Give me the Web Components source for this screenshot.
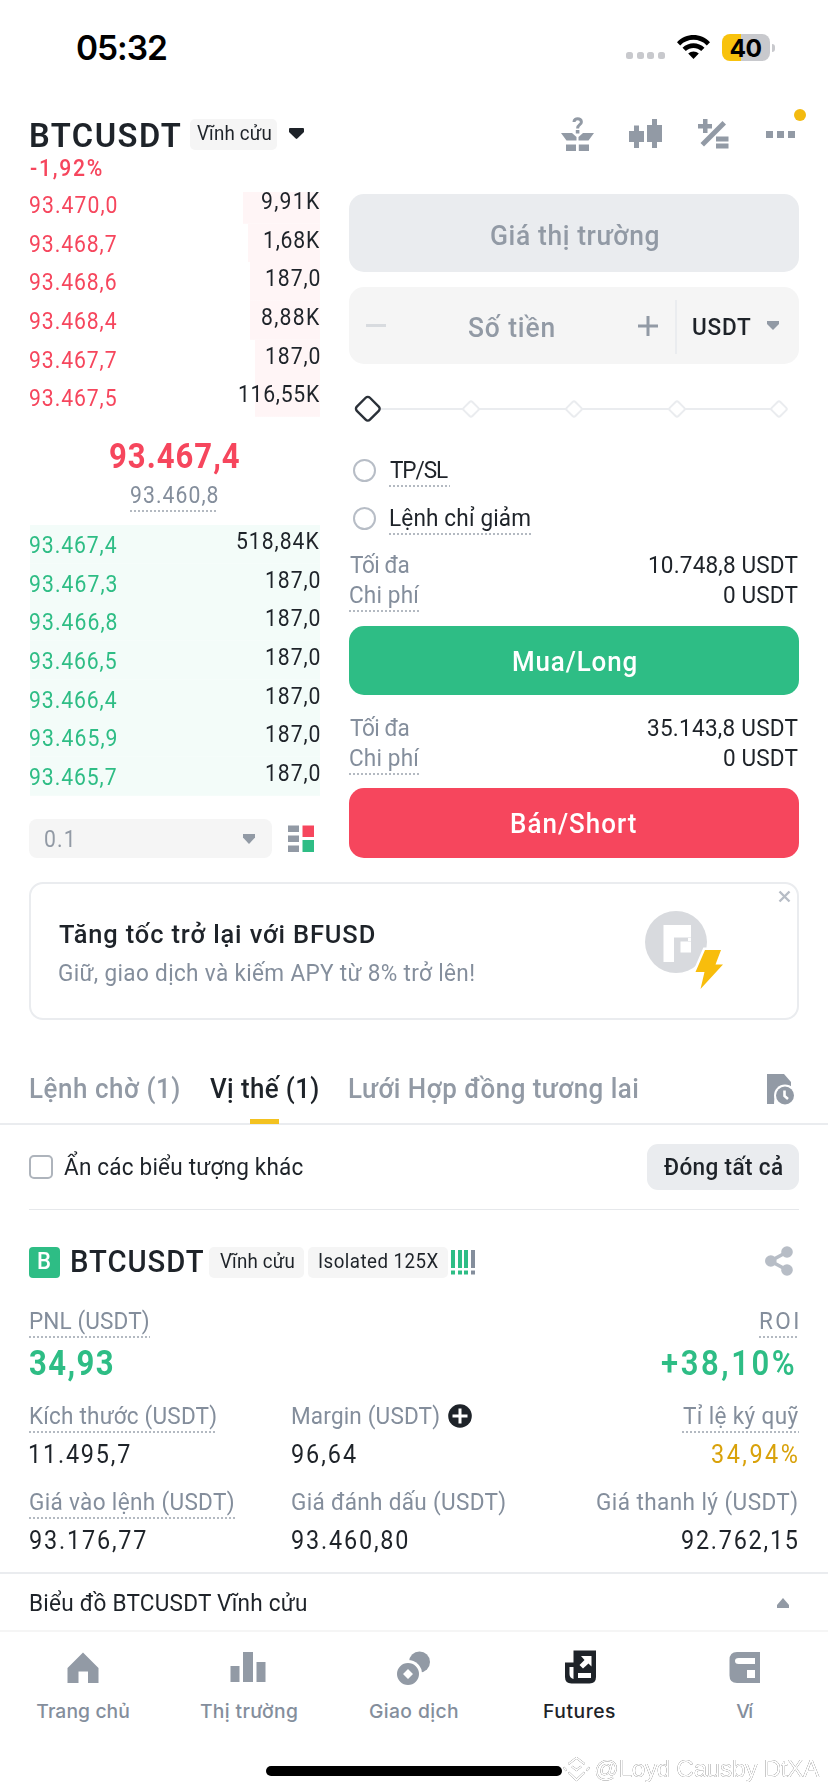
<!DOCTYPE html>
<html lang="vi">
<head>
<meta charset="utf-8">
<title>BTCUSDT Futures</title>
<style>
html,body{margin:0;padding:0;background:#fff}
body{width:828px;height:1792px;overflow:hidden;font-family:Roboto,"Noto Sans",sans-serif;color:#1e2329}
</style>
</head>
<body>
<futures-app></futures-app>
<script>
const component = (tag, css, html) => {
  const tpl = document.createElement('template');
  tpl.innerHTML = `<style>*{box-sizing:border-box}:host{display:block;box-sizing:border-box}svg{display:block;flex:none}${css}</style>${html}`;
  customElements.define(tag, class extends HTMLElement {
    connectedCallback() {
      if (this.shadowRoot) return;
      this.attachShadow({mode: 'open'}).append(tpl.content.cloneNode(true));
    }
  });
};

// A single line of text whose tracking is tuned so that its ink fills a given width.
// Figures are drawn a little condensed, words slightly so.
const pen = document.createElement('canvas').getContext('2d');
customElements.define('fit-text', class extends HTMLElement {
  connectedCallback() {
    if (this.shadowRoot) return;
    const get = (n, d) => this.getAttribute(n) ?? d;
    const text = this.textContent, w = +get('w', 50), size = +get('size', 23.5), weight = get('weight', 400);
    const family = get('font', 'Roboto');
    const sx = family !== 'Roboto' ? 1 : /^[-+\d.,%K]+$/.test(text) ? .9 : .96;
    pen.font = `${weight} ${size}px ${family}, "Noto Sans", sans-serif`;
    const m = pen.measureText(text);
    const left = m.actualBoundingBoxLeft, ink = left + m.actualBoundingBoxRight;
    const n = [...text].length;
    const track = n > 1 ? (w / sx - ink) / (n - 1) : 0;
    const dot = get('dotted', null);
    this.attachShadow({mode: 'open'}).innerHTML = `<style>
      :host{display:block;flex:none;position:relative;width:${w}px;height:32px;line-height:32px;white-space:nowrap;
        font:${weight} ${size}px/32px ${family},"Noto Sans",sans-serif;letter-spacing:${track}px;color:${get('color', 'inherit')}}
      span{display:block;width:max-content;margin-left:${left * sx}px;transform:scaleX(${sx});transform-origin:0 50%}
      i{position:absolute;top:31px;left:-1px;right:-1px;height:2px;background:repeating-linear-gradient(90deg,#b3b9c1 0 2px,transparent 2px 4px)}
      </style><span><slot></slot></span>${dot !== null ? '<i></i>' : ''}`;
  }
});
const T = (text, w, size = 23.5, weight = 400, color = 'inherit', extra = '') =>
  `<fit-text w="${w}" size="${size}" weight="${weight}" color="${color}" ${extra}>${text}</fit-text>`;
const G = '#848e9c', M = '#929aa5', INK = '#1e2329', RED = '#f6465d', GREEN = '#2ebd85';

component('status-bar', `
  :host{height:95px;display:flex;align-items:center;padding:0 53px 0 77px;color:#000}
  .sp{flex:1}
  .dots{display:flex;gap:3.6px;margin:16px 12px 0 0}.dots i{width:7px;height:7px;border-radius:2.5px;background:#c8c9cd}
  .bat{width:48px;height:27px;border-radius:8px;margin-left:12px;background:linear-gradient(90deg,#f8c20d 19.5px,#c8c9cd 19.5px);display:flex;align-items:center;justify-content:center}
  .nub{width:3px;height:8px;border-radius:0 3px 3px 0;background:#c8c9cd;margin-left:2px}`, `
  ${T('05:32', 89, 33.5, 600, '#000', 'font="Inter"')}<div class="sp"></div>
  <div class="dots"><i></i><i></i><i></i><i></i></div>
  <svg width="33" height="25" viewBox="0 0 33 25"><path d="M0 7.2C9-2.4 24-2.4 33 7.2L29.8 10.4C22.5 3 10.500 3 3.200 10.400Z"/><path d="M5.500 12.800C11.500 6.600 21.500 6.600 27.500 12.800L24.200 16.100C20 11.800 13 11.800 8.800 16.100Z"/><path d="M11.200 18.500C14.200 15.700 18.800 15.700 21.800 18.500L16.500 24Z"/></svg>
  <div class="bat">${T('40', 31, 24.5, 700, '#000', 'font="Inter"')}</div><div class="nub"></div>`);

component('soft-tag', `:host{display:flex;align-items:center;justify-content:center;height:31px;border-radius:5px;background:#f5f5f5;flex:none}`, `<slot></slot>`);

component('pair-header', `
  :host{padding:18px 33px 0 31px}
  .row{display:flex;align-items:center;height:43px}
  .row>svg{margin-top:-2px}
  soft-tag{width:87px;margin:-1px 12px 0 9px}
  .sp{flex:1}.menu{position:relative;margin-top:-1px}
  .menu b{position:absolute;right:-11px;top:-22px;width:12px;height:12px;border-radius:50%;background:#f3ba0f}
  .chg{height:22px;padding-top:2px;display:flex;align-items:center;margin-left:-1px}`, `
  <div class="row">${T('BTCUSDT', 150, 34, 600)}<soft-tag>${T('Vĩnh cửu', 74, 19.5)}</soft-tag>
  <svg width="15" height="11" viewBox="0 0 15 11" fill="#1e2329"><path d="M1 0H14Q15 0 15 1V4L8.300 10.600Q7.500 11.300 6.700 10.600L0 4V1Q0 0 1 0Z"/></svg>
  <div class="sp"></div>
  <svg width="33" height="34" viewBox="0 0 33 34" fill="${M}"><path d="M0 16H11L15.500 20V23.500H5.500ZM33 16H22L17.500 20V23.500H27.500ZM5 27.500H15V34H5ZM17.800 27.500H28V34H17.800ZM14.800 13H18.400V16.600H14.800Z"/><path d="M13 5C13 .6 20.400.6 20.400 5C20.400 8 16.600 7.400 16.600 11.400" fill="none" stroke="${M}" stroke-width="3"/></svg>
  <svg style="margin-left:35px" width="33" height="30" viewBox="0 0 33 30" fill="${M}"><path d="M0 12H5V6.500H10V12H15V23H10V29H5V23H0ZM18 6H23V0H28V6H33V23H28V29H23V23H18Z"/></svg>
  <svg style="margin-left:36px" width="31" height="30" viewBox="0 0 31 30" fill="${M}"><path d="M0 5H5V0H9.500V5H14V9.500H9.500V14H5V9.500H0ZM24.500 2L28 5.500L6 27.500L2.500 24ZM18 17.500H30.500V22.500H18ZM18 24.500H30.500V29.500H18Z"/></svg>
  <div class="menu" style="margin-left:37px"><svg width="29" height="7" fill="${M}"><path d="M0 0H7V7H0ZM11 0H18V7H11ZM22 0H29V7H22Z"/></svg><b></b></div></div>
  <div class="chg">${T('-1,92%', 72, 23.5, 500, RED)}</div>`);

const rows = (list, cls) => list.map(([p, a, aw, bg]) => `<div class="r" style="--bar:${bg}px">
  <div class="p">${T(p, 86.500, 23.500, 400, cls === 'ask' ? RED : GREEN)}</div><div class="a">${T(a, aw)}</div></div>`).join('');
component('order-book', `
  :host{width:290px;padding-top:14px}
  .asks{height:225px}
  .r{height:38.670px;display:flex;justify-content:space-between;background:linear-gradient(var(--c),var(--c)) right/var(--bar) 100% no-repeat}
  .asks .r:first-child{height:31.670px}
  .asks .r:first-child .p{margin-top:-3px}.asks .r:first-child .a{margin-top:-7px}
  .asks{--c:#fff5f6}.bids{--c:#f3fcf9}
  .p{margin-top:4px}.a{margin:0 1px 0 0}
  .mid{display:flex;flex-direction:column;align-items:center;height:108px;padding:23px 2px 0 0}
  .mid fit-text+fit-text{margin-top:7px}
  .bids{height:271px}
  .foot{display:flex;align-items:center;margin:23px 0 0 -1px;height:39px}
  .sel{width:243px;height:39px;border-radius:8px;background:#f5f5f5;display:flex;align-items:center;justify-content:space-between;padding:0 17px 0 16px;margin-right:16px}`, `
  <div class="asks">${rows([['93.470,0','9,91K',57.500,77],['93.468,7','1,68K',55.500,72],['93.468,6','187,0',53.500,70],['93.468,4','8,88K',57.500,70],['93.467,7','187,0',53.500,65],['93.467,5','116,55K',80.500,65]], 'ask')}</div>
  <div class="mid">${T('93.467,4', 129, 34.500, 700, RED)}${T('93.460,8', 86.500, 23.500, 400, G, 'dotted')}</div>
  <div class="bids">${rows([['93.467,4','518,84K',82],['93.467,3','187,0',53.500],['93.466,8','187,0',53.500],['93.466,5','187,0',53.500],['93.466,4','187,0',53.500],['93.465,9','187,0',53.500],['93.465,7','187,0',53.500]].map(r => [...r, 290]), 'bid')}</div>
  <div class="foot"><div class="sel">${T('0.1', 27, 23.500, 400, M)}<svg width="12" height="10" viewBox="0 0 12 10" fill="${M}"><path d="M0 0H12V3.500L6 10L0 3.500Z"/></svg></div>
  <svg width="27" height="28" viewBox="0 0 27 28"><path fill="${M}" d="M0 .5H11V7H0ZM0 10.500H11V17H0ZM0 20.500H11V27H0Z"/><path fill="${RED}" d="M14.500.5H26V12H14.500Z"/><path fill="${GREEN}" d="M14.500 15H26V27H14.500Z"/></svg></div>`);

component('round-box', `:host{display:flex;align-items:center;border-radius:15px;justify-content:center;color:#fff}`, `<slot></slot>`);

const small = x => `<rect x="${x - 6}" y="39" width="12" height="12" rx="2" transform="rotate(45 ${x} 45)" fill="#fff" stroke="#eaecef" stroke-width="2"/>`;
component('order-form', `
  :host{width:450px;padding-top:16px}
  .market{height:78px;background:#eaecef;margin-bottom:15px;padding-top:5px}
  .amt{height:77px;background:#f5f5f5;justify-content:flex-start;padding:3px 20px 0 17px}
  .amt svg{margin-top:-3px}
  .v{width:2px;height:54px;background:#eaecef;margin:0 16px 0 17px}
  .chk{display:flex;align-items:center;height:32px;margin-left:4px}
  .chk i{width:23px;height:23px;border-radius:50%;border:2px solid #b7bdc6;margin-right:14px}
  .kv{display:flex;justify-content:space-between;align-items:center;height:30px;padding:1px 1px 0 1px}
  .act{padding-top:2px}`, `
  <round-box class="market">${T('Giá thị trường', 167, 27.500, 500, M)}</round-box>
  <round-box class="amt"><svg width="20" height="3"><path d="M0 0H20V3H0Z" fill="#d8dbdf"/></svg>
    <div style="margin:1px 0 0 83px">${T('Số tiền', 85, 27.500, 500, M)}</div>
    <svg style="margin-left:84px" width="20" height="20"><path d="M8.500 0H11.500V8.500H20V11.500H11.500V20H8.500V11.500H0V8.500H8.500Z" fill="${M}"/></svg>
    <div class="v"></div>${T('USDT', 57.500, 23.500, 500, INK)}
    <svg style="margin-left:17px" width="12" height="9" viewBox="0 0 12 9" fill="${M}"><path d="M0 0H12V3L6 9L0 3Z"/></svg></round-box>
  <svg width="450" height="90"><path d="M30 45H430" stroke="#eaecef" stroke-width="2"/>${[122, 225, 328, 430].map(small).join('')}
    <rect x="9.500" y="35.500" width="18.500" height="18.500" rx="3" transform="rotate(45 18.800 44.800)" fill="#fff" stroke="#2b3139" stroke-width="2.400"/></svg>
  <div class="chk"><i></i>${T('TP/SL', 58.500, 23.500, 400, INK, 'dotted')}</div>
  <div class="chk" style="margin-top:16px"><i></i>${T('Lệnh chỉ giảm', 140.500, 23.500, 400, INK, 'dotted')}</div>
  <div class="kv" style="margin-top:15px">${T('Tối đa', 59, 23.500, 400, G)}${T('10.748,8 USDT', 149)}</div>
  <div class="kv">${T('Chi phí', 70, 23.500, 400, G, 'dotted')}${T('0 USDT', 74)}</div>
  <round-box class="act" style="margin-top:17px;height:69px;background:${GREEN}">${T('Mua/Long', 123, 27, 500)}</round-box>
  <div class="kv" style="margin-top:17px">${T('Tối đa', 59, 23.500, 400, G)}${T('35.143,8 USDT', 150)}</div>
  <div class="kv">${T('Chi phí', 70, 23.500, 400, G, 'dotted')}${T('0 USDT', 74)}</div>
  <round-box class="act" style="margin-top:16px;height:70px;background:${RED}">${T('Bán/Short', 125.500, 27, 500)}</round-box>`);

component('promo-banner', `
  :host{height:138px;margin:24px 29px 0;border:2px solid #eaecef;border-radius:14px;display:flex;padding:0 6px 0 28px;align-items:flex-start}
  .txt{flex:1;padding-top:34px}.txt fit-text+fit-text{margin-top:7px}
  .logo{margin:26px 55px 0 0}.x{margin-top:6px}`, `
  <div class="txt">${T('Tăng tốc trở lại với BFUSD', 315, 26.500, 500)}${T('Giữ, giao dịch và kiếm APY từ 8% trở lên!', 415, 23.500, 400, G)}</div>
  <svg class="logo" width="78" height="82" viewBox="0 0 78 82"><circle cx="31" cy="32" r="31" fill="#d8dade"/><path fill="#fff" d="M18.500 15H46V27.500H29V52H18.500ZM35.500 31.500H46V42.500H35.500ZM43 27V32H46V27Z"/><path fill="#f8bd0c" stroke="#fff" stroke-width="5" paint-order="stroke" d="M60 40H76L70.500 54.500H78L55.500 79L59.500 62H50.500Z"/></svg>
  <svg class="x" width="13" height="13" viewBox="0 0 13 13"><path d="M1.500 1.500L11.500 11.500M11.500 1.500L1.500 11.500" stroke="#b7bdc6" stroke-width="2.400"/></svg>`);

component('position-tabs', `
  :host{height:71px;margin-top:34px;border-bottom:2px solid #eaecef;padding:1px 34px 0 30px;display:flex;align-items:center}
  .on{position:relative;margin:0 31px}.on i{position:absolute;left:40px;top:46px;width:29px;height:4.500px;background:#f3c220}
  .sp{flex:1}`, `
  ${T('Lệnh chờ (1)', 149, 27, 500, M)}<div class="on">${T('Vị thế (1)', 108, 27, 500, INK)}<i></i></div>${T('Lưới Hợp đồng tương lai', 289, 27, 500, M)}
  <div class="sp"></div>
  <svg width="27" height="31" viewBox="0 0 27 31"><path fill="${M}" d="M0 0H17L24 8V14H20C12 14 7 20 7 30H0Z"/><circle cx="18" cy="21.500" r="11" fill="#fff"/><circle cx="18" cy="21.500" r="9" fill="${M}"/><path d="M17.500 16.500V22L21 25" fill="none" stroke="#fff" stroke-width="2.600"/></svg>`);

component('filter-row', `
  :host{height:85px;margin:0 29px;border-bottom:1px solid #e6e8eb;display:flex;align-items:center;justify-content:space-between}
  .l{display:flex;align-items:center}.l i{width:24px;height:24px;border:2px solid #aeb4bc;border-radius:5px;margin-right:11px}
  .b{width:152px;height:46px;border-radius:11px;background:#eaecef;color:${INK}}`, `
  <div class="l"><i></i>${T('Ẩn các biểu tượng khác', 239)}</div><round-box class="b">${T('Đóng tất cả', 118.500, 23.500, 500)}</round-box>`);

component('stat-cell', `:host([end]){display:flex;flex-direction:column;align-items:flex-end}`, `<slot></slot>`);
component('position-card', `
  :host{padding:30px 30px 16px}
  .h{display:flex;align-items:center;height:44px;margin-left:-1px}
  .bb{width:31px;height:31px;border-radius:4px;background:${GREEN};display:flex;align-items:center;justify-content:center;margin-right:12px}
  .g{display:grid;grid-template-columns:262px 306px 200px}
  .mr{display:flex;align-items:center}`, `
  <div class="h"><div class="bb">${T('B', 13, 23, 500, '#fff')}</div>${T('BTCUSDT', 131, 30.500, 500)}
    <soft-tag style="width:95px;margin:0 4px 0 6px">${T('Vĩnh cửu', 74, 19.500)}</soft-tag><soft-tag style="width:140px;margin-right:3px">${T('Isolated 125X', 119, 19.500)}</soft-tag>
    <svg width="24" height="25" viewBox="0 0 24 25"><path fill="${GREEN}" d="M0 0H4V18H0ZM7 0H11V18H7ZM13 0H17V18H13ZM0 20.500H4V24.500H0ZM7 20.500H11V24.500H7ZM13 20.500H17V24.500H13Z"/><path fill="${G}" d="M20 0H24V18H20ZM20 20.500H24V24.500H20Z"/></svg>
    <div style="flex:1"></div>
    <svg style="margin:-1px 5px 0 0" width="28" height="31" viewBox="0 0 28 31" fill="#b7bdc6"><path d="M22 6L5.500 15L22 24" fill="none" stroke="#b7bdc6" stroke-width="3.600"/><circle cx="22" cy="6" r="5.800"/><circle cx="5.800" cy="15" r="5.800"/><circle cx="22" cy="24" r="5.800"/></svg></div>
  <div class="g" style="margin-top:21px"><stat-cell>${T('PNL (USDT)', 118.500, 23.500, 400, G, 'dotted')}</stat-cell><span></span><stat-cell end>${T('ROI', 38, 23.500, 400, G, 'dotted')}</stat-cell></div>
  <div class="g" style="margin-top:10px"><stat-cell>${T('34,93', 83, 34.500, 700, GREEN)}</stat-cell><span></span><stat-cell end style="padding-right:5px">${T('+38,10%', 131.500, 34.500, 600, GREEN)}</stat-cell></div>
  <div class="g" style="margin-top:21px"><stat-cell>${T('Kích thước (USDT)', 186, 23.500, 400, G, 'dotted')}</stat-cell>
    <div class="mr">${T('Margin (USDT)', 147, 23.500, 400, G)}<svg style="margin-left:9px" width="24" height="24" viewBox="0 0 24 24"><circle cx="12" cy="12" r="11.800" fill="${INK}"/><path d="M12 4.500V19.500M4.500 12H19.500" stroke="#fff" stroke-width="3"/></svg></div>
    <stat-cell end>${T('Tỉ lệ ký quỹ', 115, 23.500, 400, G, 'dotted')}</stat-cell></div>
  <div class="g" style="margin-top:6px"><stat-cell>${T('11.495,7', 100, 26)}</stat-cell><stat-cell>${T('96,64', 64.500, 26)}</stat-cell><stat-cell end style="padding-right:1px">${T('34,94%', 85, 26, 400, '#d9a20b')}</stat-cell></div>
  <div class="g" style="margin-top:16px"><stat-cell>${T('Giá vào lệnh (USDT)', 203.500, 23.500, 400, G, 'dotted')}</stat-cell><stat-cell>${T('Giá đánh dấu (USDT)', 213, 23.500, 400, G)}</stat-cell><stat-cell end style="padding-right:1px">${T('Giá thanh lý (USDT)', 200, 23.500, 400, G)}</stat-cell></div>
  <div class="g" style="margin-top:6px"><stat-cell>${T('93.176,77', 116, 26)}</stat-cell><stat-cell>${T('93.460,80', 116, 26)}</stat-cell><stat-cell end style="padding-right:1px">${T('92.762,15', 115.500, 26)}</stat-cell></div>`);

component('chart-bar', `:host{height:60px;border-top:2px solid #eaecef;border-bottom:2px solid #f5f5f5;display:flex;align-items:center;justify-content:space-between;padding:2px 39px 0 30px}`, `
  ${T('Biểu đồ BTCUSDT Vĩnh cửu', 277)}<svg width="12" height="10" viewBox="0 0 12 10" fill="${M}"><path d="M6 0L12 7V10H0V7Z"/></svg>`);

const tab = (svg, text, w, c = G, wt = 500) => `<div class="t"><svg width="36" height="36" viewBox="0 0 36 36" fill="${c === G ? M : c}">${svg}</svg>${T(text, w, 19.300, wt, c, 'font="Inter"')}</div>`;
component('bottom-nav', `
  :host{height:160px}
  .g{display:grid;grid-template-columns:repeat(5,1fr);padding-top:18px}
  .t{display:flex;flex-direction:column;align-items:center;gap:9px}
  .home{width:296px;height:10px;border-radius:5px;background:#000;margin:39px auto 0}
  .wm{position:absolute;left:563px;top:1753px;display:flex;align-items:center;gap:5px;filter:drop-shadow(.8px .8px .5px rgba(0,0,0,.85))}`, `
  <div class="g">
  ${tab('<path d="M18 2.500L33.500 18V33H23V21.500H13.500V33H2.500V18Z"/>', 'Trang chủ', 93)}
  ${tab('<path d="M.5 16H9.500V32H.5ZM13 2H23V32H13ZM26.500 12H35.500V32H26.500Z"/>', 'Thị trường', 97)}
  ${tab('<circle cx="23.500" cy="12" r="10.500"/><circle cx="12" cy="24" r="14" fill="#fff"/><path fill-rule="evenodd" d="M12 13A11 11 0 1 0 12 35A11 11 0 1 0 12 13ZM12 19L17 24L12 29L7 24Z"/>', 'Giao dịch', 88)}
  ${tab('<path fill-rule="evenodd" d="M11.500.5H34V27Q34 33.500 27.500 33.500H9.500Q3 33.500 3 27V12.500H11.500ZM7.500 17H11.500V29Q7.500 28 7.500 24ZM16 23H29V28H16ZM19 6H29.500V16.500L26.500 13.500L21 18.500L17.500 15L22.500 10Z"/>', 'Futures', 71, INK)}
  ${tab('<path fill-rule="evenodd" d="M10 2H33V33H10Q2.500 33 2.500 25.500V10Q2.500 2 10 2ZM11.500 8Q8 8 8 11Q8 14 11.500 14H28V8ZM20 20V28H28V20Z"/>', 'Ví', 18)}
  </div><div class="home"></div>
  <div class="wm"><svg width="27" height="25" viewBox="0 0 27 25" fill="none" stroke="#fff" stroke-width="1.800"><path d="M5.500 7L13.500 .8L21.500 7M9 9.500L13.500 13L18 9.500M.5 10.500L3.500 13.500M26.500 10.500L23.500 13.500M5.500 15.500L13.500 23L21.500 15.500"/></svg>${T('@Loyd Causby DtXA', 225, 24.500, 400, '#fff', `font="'Liberation Sans'"`)}</div>`);

component('futures-app', `
  :host{width:828px;height:1792px;position:relative;background:#fff}
  main{display:flex;justify-content:space-between;padding:0 29px 0 30px}`, `
  <status-bar></status-bar><pair-header></pair-header>
  <main><order-book></order-book><order-form></order-form></main>
  <promo-banner></promo-banner><position-tabs></position-tabs><filter-row></filter-row>
  <position-card></position-card><chart-bar></chart-bar><bottom-nav></bottom-nav>`);
</script>
</body>
</html>
